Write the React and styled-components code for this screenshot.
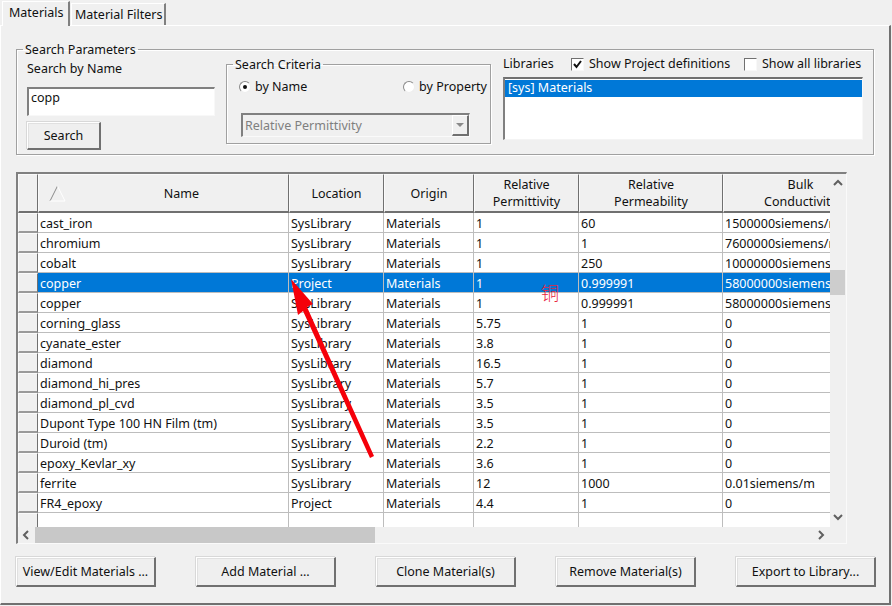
import React from 'react';
import styled, { createGlobalStyle } from 'styled-components';

const GlobalStyle = createGlobalStyle`
  html, body { margin: 0; padding: 0; background: #f0f0f0; }
  body { font-family: "Noto Sans", "Open Sans", sans-serif; font-size: 12.5px; color: #111; }
  * { box-sizing: border-box; }
`;

const Window = styled.div`
  position: relative;
  width: 892px;
  height: 606px;
  overflow: hidden;
  background: #f0f0f0;
`;

const TabBar = styled.div`
  display: flex;
  align-items: flex-end;
  height: 25px;
  padding-left: 2px;
  gap: 1px;
`;

const Tab = styled.div`
  height: ${p => (p.$active ? '25px' : '22px')};
  width: ${p => (p.$active ? '68px' : '95px')};
  padding-left: ${p => (p.$active ? '6px' : '3px')};
  margin-bottom: ${p => (p.$active ? '-1px' : '0')};
  line-height: ${p => (p.$active ? '21px' : '22px')};
  position: relative;
  z-index: ${p => (p.$active ? 2 : 0)};
  background: #f0f0f0;
  border-top: 1px solid #fff;
  border-left: 1px solid #fff;
  border-right: 2px solid #808080;
  white-space: nowrap;
`;

const Panel = styled.div`
  width: 891px;
  height: 580px;
  padding: 14px 0 0 15px;
  background: #f0f0f0;
  border-top: 1px solid #fff;
  border-left: 1px solid #fff;
  border-right: 2px solid #707070;
  border-bottom: 2px solid #707070;
`;

const Group = styled.fieldset`
  margin: 0;
  min-width: 0;
  width: ${p => p.$width}px;
  height: ${p => p.$height}px;
  padding: ${p => p.$padding};
  border: 1px solid #a0a0a0;
  box-shadow: 1px 1px 0 #fff, inset 1px 1px 0 #fff;
`;

const GroupTitle = styled.legend`
  position: relative;
  top: 1px;
  padding: 0 2px;
  margin: 0 0 -4px ${p => p.$inset}px;
  line-height: 18px;
  white-space: nowrap;
`;

const SearchRow = styled.div`
  display: flex;
  align-items: flex-start;
`;

const NameColumn = styled.div`
  width: 188px;
  margin-right: 11px;
  padding-top: 4px;
  display: flex;
  flex-direction: column;
`;

const FieldLabel = styled.div`
  height: 20px;
  line-height: 22px;
  margin-bottom: 9px;
`;

const TextField = styled.div`
  height: 29px;
  padding: 0 0 0 2px;
  line-height: 17px;
  background: #fff;
  border-top: 2px solid #808080;
  border-left: 2px solid #808080;
  border-right: 1px solid #f8f8f8;
  border-bottom: 1px solid #f8f8f8;
  margin-bottom: 6px;
`;

const Button = styled.button`
  width: ${p => p.$width || 140}px;
  height: ${p => p.$height || 30}px;
  padding: 0;
  font: inherit;
  color: #111;
  background: #efefef;
  border-top: 1px solid #fff;
  border-left: 1px solid #fff;
  border-right: 2px solid #707070;
  border-bottom: 2px solid #707070;
  box-shadow: inset 1px 1px 0 #e0e0e0, -1px -1px 0 #d8d8d8;
`;

const CriteriaWrap = styled.div`
  margin-top: 1px;
  margin-right: 12px;
`;

const RadioRow = styled.div`
  display: flex;
  justify-content: space-between;
  height: 20px;
  margin-bottom: 16px;
`;

const RadioLabel = styled.label`
  display: flex;
  align-items: center;
  gap: 4px;
  line-height: 20px;
  white-space: nowrap;
`;

const RadioDot = styled.span`
  width: 12px;
  height: 12px;
  border-radius: 50%;
  background: #fff;
  border: 1px solid;
  border-color: #8a8a8a #eee #eee #8a8a8a;
  display: flex;
  align-items: center;
  justify-content: center;

  &::after {
    content: '';
    width: 4px;
    height: 4px;
    border-radius: 50%;
    background: ${p => (p.$checked ? '#111' : 'transparent')};
  }
`;

const Select = styled.div`
  width: 229px;
  height: 24px;
  margin-left: 2px;
  display: flex;
  align-items: center;
  justify-content: space-between;
  padding-left: 2px;
  color: #7f7f7f;
  border-top: 2px solid #808080;
  border-left: 2px solid #808080;
  border-right: 1px solid #fafafa;
  border-bottom: 1px solid #fafafa;
`;

const SelectArrow = styled.span`
  width: 17px;
  height: 21px;
  display: flex;
  align-items: center;
  justify-content: center;
  border-top: 1px solid #fff;
  border-left: 1px solid #fff;
  border-right: 2px solid #707070;
  border-bottom: 2px solid #707070;

  &::after {
    content: '';
    border-left: 4px solid transparent;
    border-right: 4px solid transparent;
    border-top: 4px solid #8a8a8a;
  }
`;

const LibrariesColumn = styled.div`
  width: 360px;
`;

const LibrariesHead = styled.div`
  display: flex;
  align-items: center;
  height: 20px;
  line-height: 20px;
  margin-bottom: 3px;
  white-space: nowrap;
`;

const LibrariesTitle = styled.span`
  flex: none;
  width: 68px;
  line-height: 22px;
`;

const CheckLabel = styled.label`
  flex: none;
  display: flex;
  align-items: center;
  gap: 5px;
  width: ${p => p.$width}px;
`;

const CheckBox = styled.span`
  flex: none;
  width: 13px;
  height: 13px;
  background: #fff;
  border: 1px solid;
  border-color: #707070 #f8f8f8 #f8f8f8 #707070;
  display: flex;
  align-items: center;
  justify-content: center;
`;

const ListBox = styled.div`
  height: 63px;
  padding-top: 1px;
  background: #fff;
  border-top: 2px solid #707070;
  border-left: 2px solid #808080;
  border-right: 1px solid #f8f8f8;
  border-bottom: 1px solid #f4f4f4;
`;

const ListItem = styled.div`
  height: 17px;
  line-height: 16px;
  padding-left: 3px;
  color: #fff;
  background: #0078d7;
`;

const GridBox = styled.div`
  width: 831px;
  height: 372px;
  margin-top: 17px;
  display: grid;
  grid-template-columns: 812px 16px;
  grid-template-rows: 1fr 16px;
  background: #f0f0f0;
  border-top: 2px solid #808080;
  border-left: 2px solid #808080;
  border-right: 1px solid #fafafa;
  border-bottom: 1px solid #fafafa;
`;

const GridBody = styled.div`
  overflow: hidden;
  background: #fff;
`;

const columns = '20px 251px 95px 90px 105px 144px 155px';

const HeaderRow = styled.div`
  display: grid;
  grid-template-columns: ${columns};
  height: 39px;
  background: #f0f0f0;
`;

const HeaderCell = styled.div`
  position: relative;
  display: flex;
  align-items: center;
  justify-content: center;
  text-align: center;
  padding-left: ${p => p.$indent || 0}px;
  line-height: 17px;
  overflow: hidden;
  white-space: nowrap;
  border-top: 1px solid #fafafa;
  border-left: 1px solid #fafafa;
  border-right: 1px solid #707070;
  border-bottom: 2px solid #707070;
`;

const SortMark = styled.svg`
  position: absolute;
  left: 10px;
  top: 10px;
`;

const Row = styled.div`
  display: grid;
  grid-template-columns: ${columns};
  height: 20px;
  color: ${p => (p.$selected ? '#fff' : '#111')};
`;

const RowHead = styled.div`
  background: #f0f0f0;
  border-top: 1px solid #fafafa;
  border-left: 1px solid #fafafa;
  border-right: 1px solid #707070;
  border-bottom: 2px solid #9a9a9a;
`;

const Cell = styled.div`
  padding-left: 2px;
  line-height: 21px;
  overflow: hidden;
  white-space: nowrap;
  background: ${p => (p.$selected ? '#0078d7' : '#fff')};
  border-right: 1px solid #bdbdbd;
  border-bottom: 1px solid #bdbdbd;
`;

const VScroll = styled.div`
  position: relative;
  display: flex;
  flex-direction: column;
  align-items: center;
  justify-content: space-between;
  padding: 5px 0 6px;
`;

const VThumb = styled.div`
  position: absolute;
  top: 96px;
  left: 0;
  width: 15px;
  height: 25px;
  background: #cdcdcd;
`;

const HScroll = styled.div`
  position: relative;
  display: flex;
  align-items: center;
  justify-content: space-between;
  padding: 0 5px 0 4px;
`;

const HThumb = styled.div`
  position: absolute;
  top: 0;
  left: 17px;
  width: 340px;
  height: 16px;
  background: #c8c8c8;
`;

const ScrollCorner = styled.div``;

const ButtonBar = styled.div`
  display: flex;
  justify-content: space-between;
  width: 860px;
  margin-top: 13px;
`;

const Chevron = styled.svg`
  display: block;
  flex: none;
`;

const RedArrow = styled.svg`
  position: absolute;
  left: 0;
  top: 0;
  pointer-events: none;
`;

const Annotation = styled.span`
  position: absolute;
  left: 541px;
  top: 281px;
  font-family: "Noto Sans CJK SC", sans-serif;
  font-size: 18px;
  line-height: 22px;
  font-weight: 300;
  color: #e8243c;
`;

const materials = [
  ['cast_iron', 'SysLibrary', '1', '60', '1500000siemens/m'],
  ['chromium', 'SysLibrary', '1', '1', '7600000siemens/m'],
  ['cobalt', 'SysLibrary', '1', '250', '10000000siemens/m'],
  ['copper', 'Project', '1', '0.999991', '58000000siemens/m'],
  ['copper', 'SysLibrary', '1', '0.999991', '58000000siemens/m'],
  ['corning_glass', 'SysLibrary', '5.75', '1', '0'],
  ['cyanate_ester', 'SysLibrary', '3.8', '1', '0'],
  ['diamond', 'SysLibrary', '16.5', '1', '0'],
  ['diamond_hi_pres', 'SysLibrary', '5.7', '1', '0'],
  ['diamond_pl_cvd', 'SysLibrary', '3.5', '1', '0'],
  ['Dupont Type 100 HN Film (tm)', 'SysLibrary', '3.5', '1', '0'],
  ['Duroid (tm)', 'SysLibrary', '2.2', '1', '0'],
  ['epoxy_Kevlar_xy', 'SysLibrary', '3.6', '1', '0'],
  ['ferrite', 'SysLibrary', '12', '1000', '0.01siemens/m'],
  ['FR4_epoxy', 'Project', '4.4', '1', '0'],
];

const chevrons = {
  up: 'M1 6 L5 2 L9 6',
  down: 'M1 2 L5 6 L9 2',
  left: 'M6 1 L2 5 L6 9',
  right: 'M2 1 L6 5 L2 9',
};

function ScrollArrow({ dir }) {
  const vertical = dir === 'up' || dir === 'down';
  return (
    <Chevron width={vertical ? 10 : 8} height={vertical ? 8 : 10} viewBox={vertical ? '0 0 10 8' : '0 0 8 10'}>
      <path d={chevrons[dir]} fill="none" stroke="#606060" strokeWidth="2" />
    </Chevron>
  );
}

function MaterialRow({ values, selected }) {
  const [name, location, permittivity, permeability, conductivity] = values;
  return (
    <Row $selected={selected}>
      <RowHead />
      <Cell $selected={selected}>{name}</Cell>
      <Cell $selected={selected}>{location}</Cell>
      <Cell $selected={selected}>{location ? 'Materials' : ''}</Cell>
      <Cell $selected={selected}>{permittivity}</Cell>
      <Cell $selected={selected}>{permeability}</Cell>
      <Cell $selected={selected}>{conductivity}</Cell>
    </Row>
  );
}

export default function App() {
  return (
    <Window>
      <GlobalStyle />
      <TabBar>
        <Tab $active>Materials</Tab>
        <Tab>Material Filters</Tab>
      </TabBar>
      <Panel>
        <Group $width={858} $height={115} $padding="0 10px">
          <GroupTitle $inset={-4}>Search Parameters</GroupTitle>
          <SearchRow>
            <NameColumn>
              <FieldLabel>Search by Name</FieldLabel>
              <TextField>copp</TextField>
              <Button $width={74} $height={28}>Search</Button>
            </NameColumn>
            <CriteriaWrap>
              <Group $width={265} $height={89} $padding="8px 3px 0 12px">
                <GroupTitle $inset={-6}>Search Criteria</GroupTitle>
                <RadioRow>
                  <RadioLabel><RadioDot $checked />by Name</RadioLabel>
                  <RadioLabel><RadioDot />by Property</RadioLabel>
                </RadioRow>
                <Select>
                  Relative Permittivity
                  <SelectArrow />
                </Select>
              </Group>
            </CriteriaWrap>
            <LibrariesColumn>
              <LibrariesHead>
                <LibrariesTitle>Libraries</LibrariesTitle>
                <CheckLabel $width={173}>
                  <CheckBox>
                    <svg width="9" height="9" viewBox="0 0 9 9">
                      <path d="M1 4 L3.5 7 L8 1" fill="none" stroke="#111" strokeWidth="2" />
                    </svg>
                  </CheckBox>
                  Show Project definitions
                </CheckLabel>
                <CheckLabel $width={119}>
                  <CheckBox />
                  Show all libraries
                </CheckLabel>
              </LibrariesHead>
              <ListBox>
                <ListItem>[sys] Materials</ListItem>
              </ListBox>
            </LibrariesColumn>
          </SearchRow>
        </Group>

        <GridBox>
          <GridBody>
            <HeaderRow>
              <HeaderCell />
              <HeaderCell $indent={36}>
                <SortMark width="17" height="17" viewBox="0 0 17 17">
                  <path d="M8.5 1 L1 16" stroke="#8a8a8a" fill="none" />
                  <path d="M8.5 1 L16 16 L1 16" stroke="#fff" fill="none" />
                </SortMark>
                Name
              </HeaderCell>
              <HeaderCell>Location</HeaderCell>
              <HeaderCell>Origin</HeaderCell>
              <HeaderCell>Relative<br />Permittivity</HeaderCell>
              <HeaderCell>Relative<br />Permeability</HeaderCell>
              <HeaderCell>Bulk<br />Conductivity</HeaderCell>
            </HeaderRow>
            {materials.map((values, i) => (
              <MaterialRow key={i} values={values} selected={i === 3} />
            ))}
            <MaterialRow values={['', '', '', '', '']} />
          </GridBody>
          <VScroll>
            <ScrollArrow dir="up" />
            <VThumb />
            <ScrollArrow dir="down" />
          </VScroll>
          <HScroll>
            <ScrollArrow dir="left" />
            <HThumb />
            <ScrollArrow dir="right" />
          </HScroll>
          <ScrollCorner />
        </GridBox>

        <ButtonBar>
          <Button>View/Edit Materials ...</Button>
          <Button>Add Material ...</Button>
          <Button>Clone Material(s)</Button>
          <Button>Remove Material(s)</Button>
          <Button>Export to Library...</Button>
        </ButtonBar>
      </Panel>

      <RedArrow width="892" height="606" viewBox="0 0 892 606">
        <polygon points="291,279 313,304 307,307 374,456 370,458 303,311 298,315" fill="#f5000a" />
      </RedArrow>
      <Annotation>铜</Annotation>
    </Window>
  );
}
